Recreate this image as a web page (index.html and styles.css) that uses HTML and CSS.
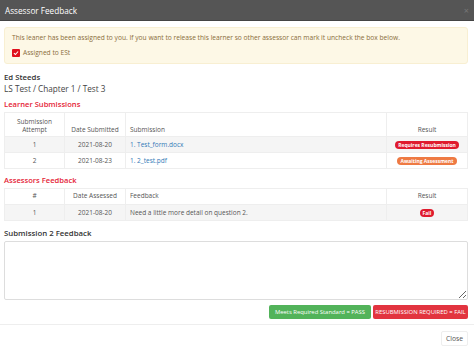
FILE: index.html
```html
<!DOCTYPE html>
<html>
<head>
<meta charset="utf-8">
<link rel="stylesheet" href="styles.css">
</head>
<body>
<div class="modal">
  <div class="modal-header">
    <span class="title">Assessor Feedback</span>
    <span class="x">×</span>
  </div>
  <div class="modal-body">
    <div class="alert">
      <p>This leaner has been assigned to you. If you want to release this learner so other assessor can mark it uncheck the box below.</p>
      <label class="check"><span class="box"><svg viewBox="0 0 10 10" width="6" height="6"><path d="M1.5 5.2 L4 7.5 L8.5 2.5" fill="none" stroke="#fff" stroke-width="1.8"/></svg></span>Assigned to ESt</label>
    </div>
    <div class="name">Ed Steeds</div>
    <div class="path">LS Test / Chapter 1 / Test 3</div>
    <h3 class="section">Learner Submissions</h3>
    <table class="tbl t1">
      <thead>
        <tr><th class="c">Submission<br>Attempt</th><th class="c">Date Submitted</th><th>Submission</th><th class="c">Result</th></tr>
      </thead>
      <tbody>
        <tr class="odd"><td class="c">1</td><td class="c">2021-08-20</td><td><a>1. Test_form.docx</a></td><td class="c"><span class="badge red">Requires Resubmission</span></td></tr>
        <tr><td class="c">2</td><td class="c">2021-08-23</td><td><a>1. 2_test.pdf</a></td><td class="c"><span class="badge orange">Awaiting Assessment</span></td></tr>
      </tbody>
    </table>
    <h3 class="section s2">Assessors Feedback</h3>
    <table class="tbl t2">
      <thead>
        <tr><th class="c">#</th><th class="c">Date Assessed</th><th>Feedback</th><th class="c">Result</th></tr>
      </thead>
      <tbody>
        <tr class="odd"><td class="c">1</td><td class="c">2021-08-20</td><td>Need a little more detail on question 2.</td><td class="c"><span class="badge red">Fail</span></td></tr>
      </tbody>
    </table>
    <h4 class="sub">Submission 2 Feedback</h4>
    <textarea class="ta"></textarea>
    <div class="actions">
      <button class="btn green">Meets Required Standard = PASS</button>
      <button class="btn redbtn">RESUBMISSION REQUIRED = FAIL</button>
    </div>
  </div>
  <div class="modal-footer">
    <button class="close">Close</button>
  </div>
</div>
</body>
</html>
```
FILE: styles.css
```css
* { box-sizing: border-box; }
html, body { margin: 0; padding: 0; background: #fff; }
body { font-family: "Open Sans", "Noto Sans", sans-serif; color: #555; width: 474px; height: 348px; overflow: hidden; }
.modal { width: 474px; }
.modal-header { height: 21px; background: #555; border-bottom: 1px solid #444; display: flex; align-items: center; justify-content: space-between; padding: 0 5px; }
.title { color: #fff; font-size: 8.2px; }
.x { color: #777; font-size: 9px; }
.modal-body { padding: 6px 6px 0 4px; }
.alert { background: #fdf8e6; border: 1px solid #f8efd2; border-radius: 3px; padding: 5px 7px 6px 7px; color: #8a6d3b; font-size: 6.65px; height: 37px; }
.alert p { margin: 0 0 6px 0; }
.check { display: flex; align-items: center; gap: 3px; }
.box { width: 8px; height: 8px; background: #e0101c; display: inline-flex; align-items: center; justify-content: center; border-radius: 1px; }
.name { font-size: 7.8px; font-weight: 600; color: #333; margin-top: 7px; line-height: 12px; }
.path { font-size: 8.2px; color: #444; line-height: 12px; }
.section { color: #e51c36; font-size: 7.6px; font-weight: 600; margin: 3px 0 2px 0; line-height: 12px; }
.section.s2 { margin-top: 5px; }
.tbl { width: 464px; border-collapse: collapse; font-size: 6.5px; color: #555; }
.tbl th { font-weight: 400; border: 1px solid #eee; padding: 2px 4px; text-align: left; vertical-align: bottom; line-height: 1.25; }
.tbl td { border: 1px solid #eee; padding: 0 4px; height: 16px; }
.tbl .c { text-align: center; }
.tbl tr.odd td { background: #f5f5f5; }
.t1 th { height: 24px; }
.t1 th:nth-child(1) { width: 60px; }
.t1 th:nth-child(2) { width: 61px; }
.t1 th:nth-child(4) { width: 81px; }
.t2 th { height: 16px; vertical-align: middle; }
.t2 th:nth-child(1) { width: 60px; }
.t2 th:nth-child(2) { width: 61px; }
.t2 th:nth-child(4) { width: 81px; }
.tbl a { color: #337ab7; }
.badge { display: inline-block; font-size: 5px; font-weight: 700; color: #fff; border-radius: 5px; padding: 1px 3px; line-height: 6px; }
.badge.red { background: #df1b2e; }
.badge.orange { background: #ee7a43; }
.sub { font-size: 7.8px; font-weight: 600; color: #333; margin: 6px 0 2px 0; line-height: 12px; }
.ta { display: block; width: 464px; height: 59px; border: 1px solid #ddd; border-radius: 2px; resize: vertical; }
.actions { display: flex; justify-content: flex-end; gap: 2px; margin-top: 5px; }
.btn { border: none; border-radius: 2px; color: #fff; font-family: inherit; font-size: 5.9px; height: 14px; padding: 0; white-space: nowrap; }
.btn.green { background: #52b35a; width: 102px; }
.btn.redbtn { background: #e2343f; width: 95px; }
.modal-footer { border-top: 1px solid #eee; margin-top: 5px; display: flex; justify-content: flex-end; padding: 6px 6px 0 0; }
.close { background: #fff; border: 1px solid #eee; border-radius: 2px; font-family: inherit; font-size: 6.8px; color: #555; height: 15px; width: 27px; padding: 0; }
```
